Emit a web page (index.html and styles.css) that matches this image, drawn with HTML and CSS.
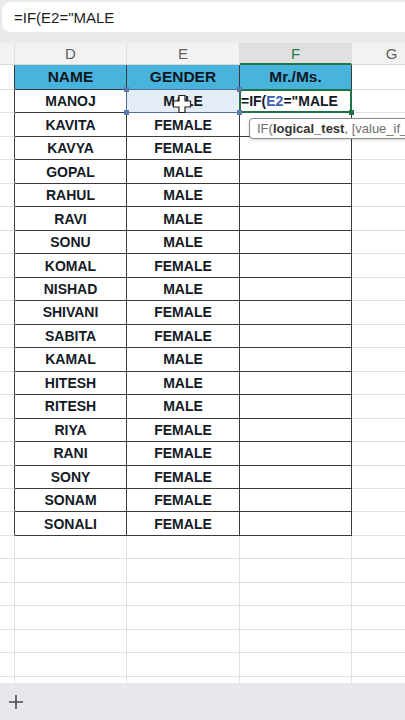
FILE: index.html
```html
<!DOCTYPE html>
<html lang="en">
  <head>
    <meta charset="UTF-8" />
    <meta name="viewport" content="width=device-width, initial-scale=1.0" />
    <title>Sheet</title>
    <link rel="stylesheet" href="styles.css">
  </head>
  <body>
    <div class="app">
      <!-- Formula bar -->
      <header class="formulaBar">
        <div class="formulaInput">=IF(E2="MALE</div>
      </header>

      <!-- Grid -->
      <main class="sheet">
        <div class="grid">
          <div class="cell colHead"></div>
          <div class="cell colHead">D</div>
          <div class="cell colHead">E</div>
          <div class="cell colHead active">F</div>
          <div class="cell colHead">G</div>

          <div class="cell stub edge"></div>
          <div class="cell t head">NAME</div>
          <div class="cell t head">GENDER</div>
          <div class="cell t head">Mr./Ms.</div>
          <div class="cell"></div>

          <div class="cell stub edge"></div>
          <div class="cell t">MANOJ</div>
          <div class="cell t range">
            MALE
            <span class="handle tl"></span>
            <span class="handle tr"></span>
            <span class="handle bl"></span>
            <span class="handle br"></span>
            <svg class="pointer" width="20" height="20" viewBox="0 0 20 20">
              <path d="M7 1.5h6v5.5h5.5v6H13v5.5H7V13H1.5V7H7z" fill="#fff" stroke="#222" stroke-width="1.2" />
            </svg>
          </div>
          <div class="cell t editing">=IF(<span class="ref">E2</span>="MALE<span class="fill"></span></div>
          <div class="cell"></div>

          <div class="cell stub edge"></div><div class="cell t">KAVITA</div><div class="cell t">FEMALE</div><div class="cell t"></div><div class="cell"></div>
          <div class="cell stub edge"></div><div class="cell t">KAVYA</div><div class="cell t">FEMALE</div><div class="cell t"></div><div class="cell"></div>
          <div class="cell stub edge"></div><div class="cell t">GOPAL</div><div class="cell t">MALE</div><div class="cell t"></div><div class="cell"></div>
          <div class="cell stub edge"></div><div class="cell t">RAHUL</div><div class="cell t">MALE</div><div class="cell t"></div><div class="cell"></div>
          <div class="cell stub edge"></div><div class="cell t">RAVI</div><div class="cell t">MALE</div><div class="cell t"></div><div class="cell"></div>
          <div class="cell stub edge"></div><div class="cell t">SONU</div><div class="cell t">MALE</div><div class="cell t"></div><div class="cell"></div>
          <div class="cell stub edge"></div><div class="cell t">KOMAL</div><div class="cell t">FEMALE</div><div class="cell t"></div><div class="cell"></div>
          <div class="cell stub edge"></div><div class="cell t">NISHAD</div><div class="cell t">MALE</div><div class="cell t"></div><div class="cell"></div>
          <div class="cell stub edge"></div><div class="cell t">SHIVANI</div><div class="cell t">FEMALE</div><div class="cell t"></div><div class="cell"></div>
          <div class="cell stub edge"></div><div class="cell t">SABITA</div><div class="cell t">FEMALE</div><div class="cell t"></div><div class="cell"></div>
          <div class="cell stub edge"></div><div class="cell t">KAMAL</div><div class="cell t">MALE</div><div class="cell t"></div><div class="cell"></div>
          <div class="cell stub edge"></div><div class="cell t">HITESH</div><div class="cell t">MALE</div><div class="cell t"></div><div class="cell"></div>
          <div class="cell stub edge"></div><div class="cell t">RITESH</div><div class="cell t">MALE</div><div class="cell t"></div><div class="cell"></div>
          <div class="cell stub edge"></div><div class="cell t">RIYA</div><div class="cell t">FEMALE</div><div class="cell t"></div><div class="cell"></div>
          <div class="cell stub edge"></div><div class="cell t">RANI</div><div class="cell t">FEMALE</div><div class="cell t"></div><div class="cell"></div>
          <div class="cell stub edge"></div><div class="cell t">SONY</div><div class="cell t">FEMALE</div><div class="cell t"></div><div class="cell"></div>
          <div class="cell stub edge"></div><div class="cell t">SONAM</div><div class="cell t">FEMALE</div><div class="cell t"></div><div class="cell"></div>
          <div class="cell stub edge"></div><div class="cell t">SONALI</div><div class="cell t">FEMALE</div><div class="cell t"></div><div class="cell"></div>

          <div class="cell stub"></div><div class="cell"></div><div class="cell"></div><div class="cell"></div><div class="cell"></div>
          <div class="cell stub"></div><div class="cell"></div><div class="cell"></div><div class="cell"></div><div class="cell"></div>
          <div class="cell stub"></div><div class="cell"></div><div class="cell"></div><div class="cell"></div><div class="cell"></div>
          <div class="cell stub"></div><div class="cell"></div><div class="cell"></div><div class="cell"></div><div class="cell"></div>
          <div class="cell stub"></div><div class="cell"></div><div class="cell"></div><div class="cell"></div><div class="cell"></div>
          <div class="cell stub"></div><div class="cell"></div><div class="cell"></div><div class="cell"></div><div class="cell"></div>
          <div class="cell stub"></div><div class="cell"></div><div class="cell"></div><div class="cell"></div><div class="cell"></div>
        </div>

        <!-- Function hint, runs past the right edge like the reference -->
        <div class="hint">IF(<b>logical_test</b>, [value_if_true], [value_if_false])</div>
      </main>

      <!-- Sheet tabs -->
      <footer class="tabs">
        <svg width="16" height="16" viewBox="0 0 16 16">
          <path d="M8 1v14M1 8h14" stroke="#4a4a4a" stroke-width="1.6" />
        </svg>
      </footer>
    </div>
  </body>
</html>
```

FILE: styles.css
```css
body {
  margin: 0;
  padding: 0;
  font-family: "Liberation Sans", Arial, sans-serif;
  background: #ffffff;
}

.app {
  display: flex;
  flex-direction: column;
  height: 720px;
  overflow: hidden;
}

/* ===== Formula bar ===== */
.formulaBar {
  height: 43px;
  box-sizing: border-box;
  padding: 2px 0 11px 2px;
  background: #e9eaec;
  flex-shrink: 0;
}

.formulaInput {
  height: 30px;
  display: flex;
  align-items: center;
  padding-left: 12px;
  background: #ffffff;
  border-radius: 9px 0 0 9px;
  font-size: 15px;
  color: #1d1d1d;
}

/* ===== Grid ===== */
.sheet {
  position: relative;
  flex: 1;
  overflow: hidden;
}

.grid {
  display: grid;
  grid-template-columns: 15px 112px 113px 112px 80px;
  grid-template-rows: 22px 25px repeat(26, 23.47px);
}

.cell {
  position: relative;
  box-sizing: border-box;
  display: flex;
  align-items: center;
  justify-content: center;
  border-right: 1px solid #e1e1e1;
  border-bottom: 1px solid #e1e1e1;
  font-size: 14px;
  font-weight: bold;
  color: #131a26;
  white-space: nowrap;
}

.colHead {
  background: #f2f2f2;
  border-bottom-color: #d6d6d6;
  border-right-color: #dddddd;
  font-weight: normal;
  font-size: 15px;
  color: #616161;
}

.colHead.active {
  background: #e0e0e0;
  color: #1f7a4d;
  border-bottom: 2px solid #217346;
}

.stub {
  border-right-color: #e1e1e1;
}

.stub.edge {
  border-right-color: #3a3a3a;
}

.t {
  border-right-color: #3a3a3a;
  border-bottom-color: #3a3a3a;
}

.head {
  background: #48b3dc;
  font-size: 15.5px;
  color: #0f1722;
}

/* selected range E2 */
.range {
  background: #e4ecf6;
}

.range::after {
  content: "";
  position: absolute;
  top: -1px;
  left: -1px;
  right: -1px;
  bottom: -1px;
  border: 1px solid #50709f;
}

.handle {
  position: absolute;
  width: 5px;
  height: 5px;
  background: #5a7bb2;
  z-index: 2;
}

.handle.tl { top: -3px; left: -3px; }
.handle.tr { top: -3px; right: -3px; }
.handle.bl { bottom: -3px; left: -3px; }
.handle.br { bottom: -3px; right: -3px; }

.pointer {
  position: absolute;
  left: 45px;
  top: 4px;
  z-index: 3;
}

/* active cell F2 */
.editing {
  justify-content: flex-start;
  padding-left: 1px;
  z-index: 1;
}

.editing::after {
  content: "";
  position: absolute;
  top: -1px;
  left: -1px;
  right: -1px;
  bottom: -1px;
  border: 2px solid #217346;
}

.ref {
  color: #3f5fb8;
}

.fill {
  position: absolute;
  right: -3px;
  bottom: -3px;
  width: 5px;
  height: 5px;
  background: #217346;
  z-index: 2;
}

/* function hint */
.hint {
  position: absolute;
  left: 249px;
  top: 75px;
  height: 21px;
  box-sizing: border-box;
  display: flex;
  align-items: center;
  padding: 0 7px;
  background: #ffffff;
  border: 1px solid #8c8c8c;
  border-radius: 4px;
  box-shadow: 0 1px 3px rgba(0, 0, 0, 0.18);
  font-size: 13px;
  color: #6e6e6e;
  white-space: nowrap;
  z-index: 4;
}

.hint b {
  color: #333333;
}

/* ===== Sheet tabs ===== */
.tabs {
  height: 37px;
  flex-shrink: 0;
  display: flex;
  align-items: center;
  padding-left: 8px;
  background: #e6e8eb;
}
```
